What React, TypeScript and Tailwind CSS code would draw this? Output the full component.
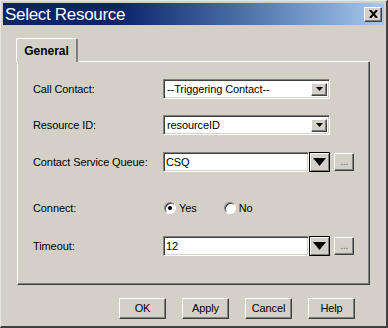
import React from "react";

const sunken =
  "border-t-[#808080] border-l-[#808080] border-b-white border-r-white border shadow-[inset_1px_1px_0_#404040,inset_-1px_-1px_0_#d4d0c8]";
const raised =
  "border border-t-[#ffffff] border-l-[#ffffff] border-b-[#404040] border-r-[#404040] shadow-[inset_-1px_-1px_0_#808080,inset_1px_1px_0_#d4d0c8]";
const txt = "text-[11px] leading-none tracking-[-0.1px] text-black";

function Combo({ value }: { value: string }) {
  return (
    <div className={`flex items-center w-[167px] h-[20px] bg-white ${sunken} pl-[3px] pr-[2px]`}>
      <span className={`flex-1 ${txt}`}>{value}</span>
      <div className={`w-[16px] h-[13px] bg-[#d4d0c8] flex items-center justify-center ${raised}`}>
        <svg width="7" height="4" viewBox="0 0 7 4">
          <path d="M0 0h7L3.5 4z" fill="#000" />
        </svg>
      </div>
    </div>
  );
}

function TextPick({ value }: { value: string }) {
  return (
    <div className="flex items-center">
      <div className={`flex items-center w-[146px] h-[20px] bg-white ${sunken} pl-[2px]`}>
        <span className={txt}>{value}</span>
      </div>
      <div className="w-[21px] h-[20px] bg-[#d4d0c8] flex items-center justify-center border border-black shadow-[inset_1px_1px_0_#ffffff,inset_-1px_-1px_0_#808080]">
        <svg width="13" height="8" viewBox="0 0 13 8">
          <path d="M0 0h13L6.5 8z" fill="#000" />
        </svg>
      </div>
      <div className={`ml-[4px] w-[20px] h-[18px] bg-[#d4d0c8] flex items-end justify-center pb-[3px] ${raised}`}>
        <span className="text-[11px] leading-none text-[#707070] tracking-[-0.5px]">...</span>
      </div>
    </div>
  );
}

function Radio({ checked, label }: { checked?: boolean; label: string }) {
  return (
    <div className="flex items-center gap-[3px]">
      <div className="w-[12px] h-[12px] rounded-full bg-white border border-t-[#808080] border-l-[#808080] border-b-white border-r-white shadow-[inset_1px_1px_0_#404040] flex items-center justify-center">
        {checked && <div className="w-[4px] h-[4px] rounded-full bg-black" />}
      </div>
      <span className={txt}>{label}</span>
    </div>
  );
}

function Row({ label, className, children }: { label: string; className: string; children: React.ReactNode }) {
  return (
    <div className={`flex items-center h-[20px] ${className}`}>
      <span className={`w-[130px] ${txt}`}>{label}</span>
      {children}
    </div>
  );
}

function Btn({ label, w }: { label: string; w: string }) {
  return (
    <div className={`${w} h-[21px] bg-[#d4d0c8] flex items-center justify-center ${raised}`}>
      <span className={txt}>{label}</span>
    </div>
  );
}

export default function App() {
  return (
    <div
      className="w-[388px] h-[328px] bg-[#d4d0c8] p-[2px] border-r-2 border-b-2 border-r-[#404040] border-b-[#404040] border-t border-l border-t-[#e8e6e0] border-l-[#e8e6e0] overflow-hidden"
      style={{ fontFamily: '"Liberation Sans", Arial, sans-serif' }}
    >
      <div className="h-[22px] flex items-center justify-between pl-[2px] pr-[2px] bg-gradient-to-r from-[#0a246a] from-[30%] to-[#a6caf0]">
        <span className="text-white text-[17px] leading-none tracking-[-0.3px]">Select Resource</span>
        <div className={`w-[18px] h-[15px] bg-[#d4d0c8] flex items-center justify-center ${raised}`}>
          <svg width="9" height="8" viewBox="0 0 9 8">
            <path d="M1 0L8 8M8 0L1 8" stroke="#000" strokeWidth="2" fill="none" />
          </svg>
        </div>
      </div>

      <div className="mt-[13px] pl-[13px] flex">
        <div className="w-[62px] h-[24px] border-t border-l border-white border-r-2 border-r-[#808080] rounded-t-[2px] flex items-center justify-center relative z-10 bg-[#d4d0c8] -mb-[1px]">
          <span className="text-[12px] font-bold leading-none text-black">General</span>
        </div>
      </div>

      <div className="ml-[14px] w-[353px] h-[224px] border-l border-t border-white border-r border-b border-r-[#404040] border-b-[#404040] shadow-[inset_-1px_-1px_0_#808080] pl-[15px] pt-[1px]">
        <Row label="Call Contact:" className="mt-[16px]">
          <Combo value="--Triggering Contact--" />
        </Row>
        <Row label="Resource ID:" className="mt-[16px]">
          <Combo value="resourceID" />
        </Row>
        <Row label="Contact Service Queue:" className="mt-[17px]">
          <TextPick value="CSQ" />
        </Row>
        <Row label="Connect:" className="mt-[26px]">
          <div className="flex items-center gap-[27px] pl-[1px]">
            <Radio checked label="Yes" />
            <Radio label="No" />
          </div>
        </Row>
        <Row label="Timeout:" className="mt-[18px]">
          <TextPick value="12" />
        </Row>
      </div>

      <div className="mt-[13px] pl-[116px] flex gap-[16px]">
        <Btn label="OK" w="w-[47px]" />
        <Btn label="Apply" w="w-[47px]" />
        <Btn label="Cancel" w="w-[47px]" />
        <Btn label="Help" w="w-[47px]" />
      </div>
    </div>
  );
}
